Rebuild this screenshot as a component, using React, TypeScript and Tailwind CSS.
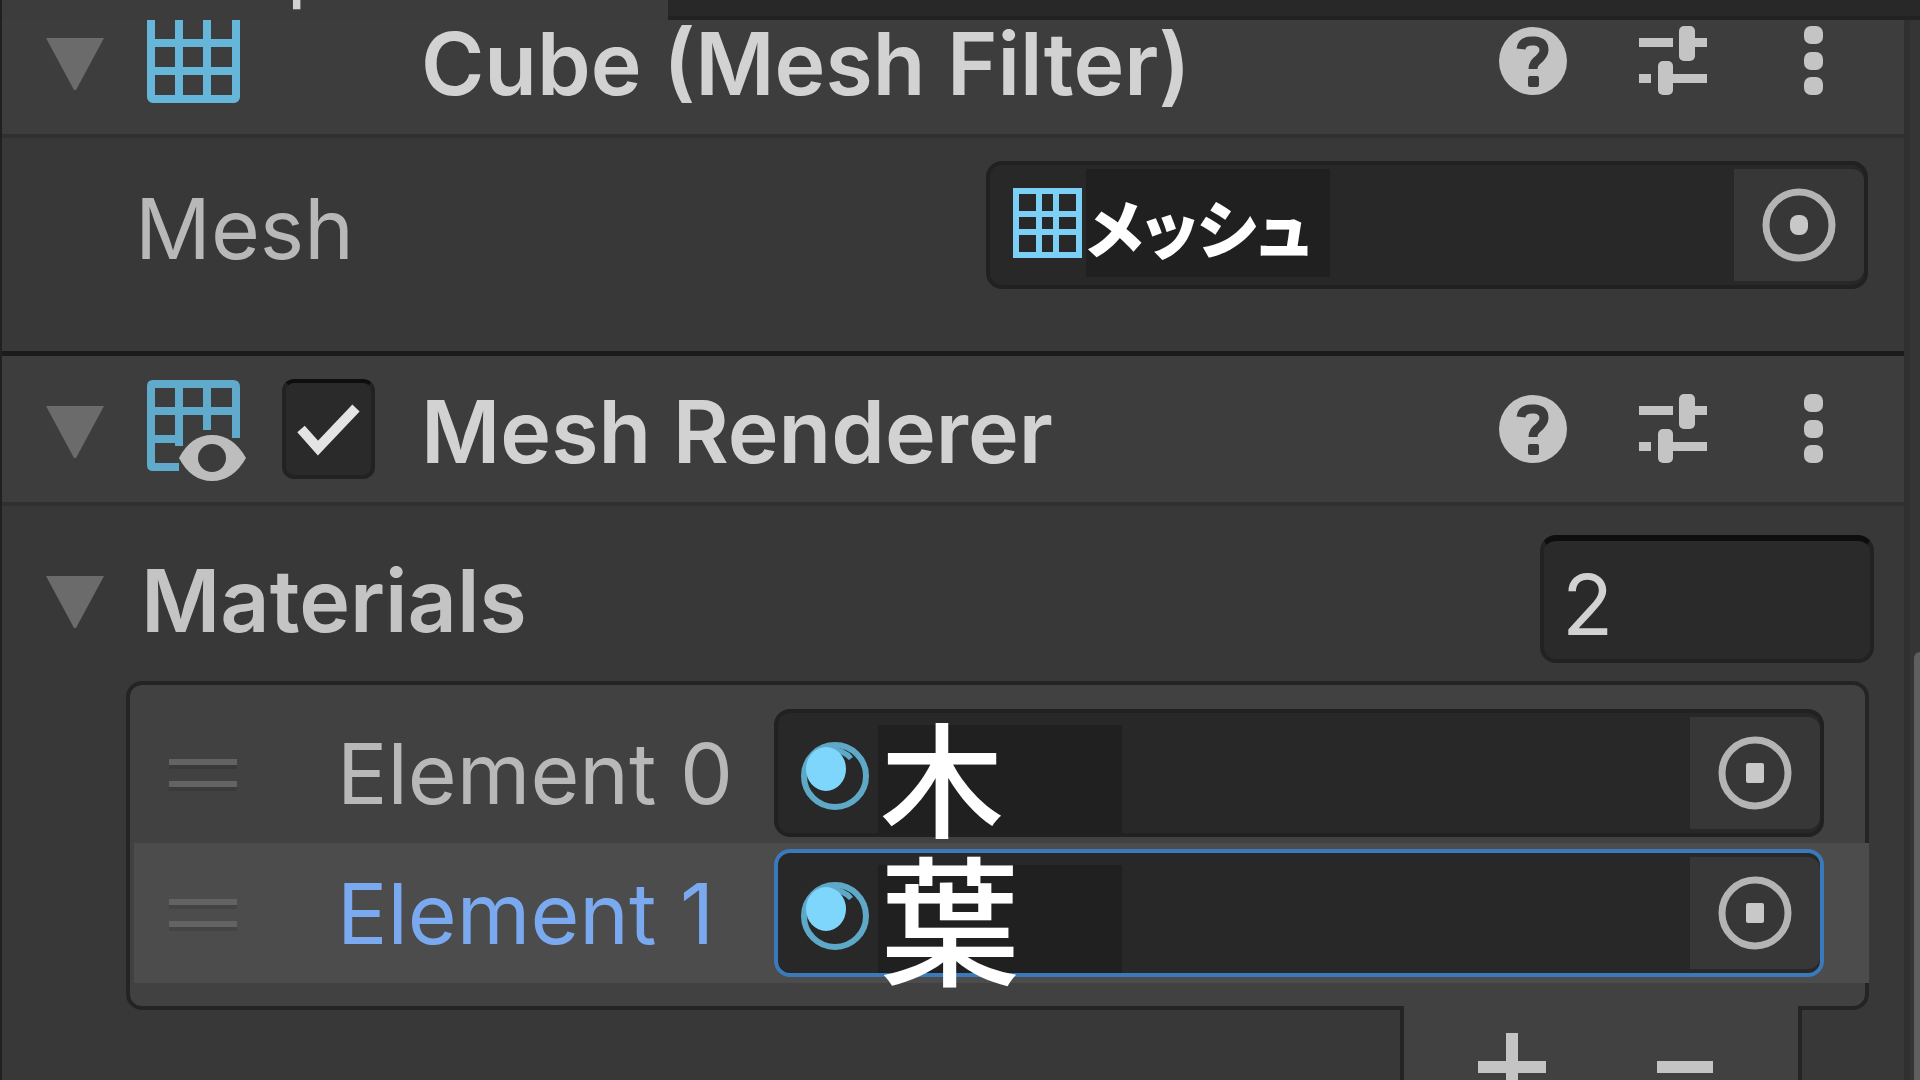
import { useState } from 'react';
import type { ReactNode } from 'react';
import clsx from 'clsx';

function FoldArrow() {
  return (
    <button type="button" aria-label="Toggle foldout" className="w-15 shrink-0">
      <svg viewBox="0 0 60 60" className="w-full fill-[#6b6b6b]">
        <path d="M1 7H59L31 59H29Z" />
      </svg>
    </button>
  );
}

function MeshFilterIcon() {
  return (
    <svg viewBox="0 0 104 106" className="w-26 shrink-0" fill="none" stroke="#66b6d9" strokeWidth="8">
      <rect x="6" y="7" width="85" height="84" rx="2" />
      <path d="M34 7V91M62 7V91M6 35H91M6 63H91" />
    </svg>
  );
}

function MeshRendererIcon() {
  return (
    <svg viewBox="0 0 104 106" className="w-26 shrink-0" fill="none">
      <g stroke="#60abcc" strokeWidth="8">
        <path d="M34 91H8Q6 91 6 89V10Q6 8 8 8H88Q91 8 91 11V62" />
        <path d="M34 8V70M62 8V54M6 35H91M6 63H38" />
      </g>
      <path d="M34 82Q46 59 67 59T101 82Q88 105 67 105T34 82Z" fill="#bdbdbd" />
      <circle cx="67" cy="82" r="14" fill="#3c3c3c" />
    </svg>
  );
}

function MeshAssetIcon() {
  return (
    <svg viewBox="0 0 70 76" className="w-17.5 shrink-0" fill="none" stroke="#7cd0f5" strokeWidth="6">
      <rect x="4" y="4" width="63" height="64" />
      <path d="M27 4V68M44 4V68M4 27H67M4 45H67" />
    </svg>
  );
}

function MaterialIcon() {
  return (
    <svg viewBox="0 0 70 76" className="w-17.5 shrink-0" fill="none">
      <circle cx="35" cy="41" r="31" stroke="#5fa9c8" strokeWidth="6" />
      <path d="M28 11Q46 12 53 22L49 25Q42 18 28 15Z" fill="#5fa9c8" />
      <ellipse cx="26" cy="34" rx="20" ry="22" fill="#7fd6fd" />
    </svg>
  );
}

function HeaderActions() {
  return (
    <div className="ml-auto flex items-center gap-17.5 pr-14 text-[#c4c4c4]">
      <button type="button" aria-label="Help">
        <svg viewBox="0 0 70 70" className="w-17.5" fill="none">
          <circle cx="35" cy="35" r="34" fill="currentColor" />
          <path
            d="M23 23Q24 15 34 15H37Q46 16 46 24Q46 28 41 33Q35 37 35 43"
            stroke="#3c3c3c"
            strokeWidth="9"
          />
          <rect x="30" y="50" width="11" height="11" rx="2" fill="#3c3c3c" />
        </svg>
      </button>
      <button type="button" aria-label="Presets">
        <svg viewBox="0 0 70 70" className="w-17.5 fill-current">
          <rect x="1" y="12" width="34" height="9" />
          <rect x="41" y="0" width="16" height="35" rx="5" />
          <rect x="57" y="12" width="12" height="9" />
          <rect x="1" y="48" width="12" height="9" />
          <rect x="20" y="35" width="15" height="34" rx="5" />
          <rect x="35" y="48" width="34" height="9" />
        </svg>
      </button>
      <button type="button" aria-label="More options">
        <svg viewBox="0 0 70 70" className="w-17.5 fill-current">
          <rect x="26" y="0" width="19" height="18" rx="7" />
          <rect x="26" y="26" width="19" height="18" rx="7" />
          <rect x="26" y="51" width="19" height="18" rx="7" />
        </svg>
      </button>
    </div>
  );
}

interface ComponentHeaderProps {
  title: string;
  icon: ReactNode;
  toggle?: ReactNode;
}

function ComponentHeader({ title, icon, toggle }: ComponentHeaderProps) {
  return (
    <div className="flex h-[146px] shrink-0 items-center bg-[#3d3d3d] pl-[43px]">
      <FoldArrow />
      <div className="ml-10">{icon}</div>
      <div className="ml-[33px] w-[93px]">{toggle}</div>
      <h2 className="ml-[46px] pt-1.5 text-[86px] leading-none font-semibold whitespace-nowrap text-[#d2d2d2]">
        {title}
      </h2>
      <HeaderActions />
    </div>
  );
}

interface ObjectFieldProps {
  id: string;
  icon: ReactNode;
  focused?: boolean;
  inList?: boolean;
  children: ReactNode;
}

function ObjectField({ id, icon, focused, inList, children }: ObjectFieldProps) {
  return (
    <div
      className={clsx(
        'flex h-32 flex-1 items-center rounded-2xl border-4 bg-[#282828] pl-[22px]',
        focused ? 'border-[#3a79bb]' : 'border-[#212121]'
      )}
    >
      {icon}
      <div
        className={clsx(
          "flex h-27 w-[244px] items-center bg-[#202020] font-['Noto_Sans_CJK_JP',sans-serif] whitespace-nowrap text-white",
          inList ? 'ml-2 self-end pb-2.5 pl-0.5' : 'mt-1 ml-1 self-start pt-1'
        )}
      >
        {children}
      </div>
      <button
        id={id}
        type="button"
        className="ml-auto flex h-28 w-[130px] items-center justify-center rounded-r-xl bg-[#373737]"
      >
        <svg viewBox="0 0 74 74" className="w-[74px]" fill="none">
          <circle cx="37" cy="37" r="33" stroke="#b4b4b4" strokeWidth="7" />
          <rect x="28" y="27" width="18" height="20" rx={inList ? 2 : 8} fill="#c8c8c8" />
        </svg>
      </button>
    </div>
  );
}

interface ElementRowProps {
  id: string;
  label: string;
  selected?: boolean;
  children: ReactNode;
}

function ElementRow({ id, label, selected, children }: ElementRowProps) {
  return (
    <li className={clsx('-mr-1 ml-1 flex h-35 items-center pr-[45px] pl-[35px]', selected && 'bg-[#4c4c4c]')}>
      <svg viewBox="0 0 68 36" className="w-17 shrink-0">
        <path d="M0 7H68M0 29H68" stroke="#636363" strokeWidth="6" />
        <path d="M0 12H68M0 34H68" stroke="#000" strokeOpacity="0.1" strokeWidth="4" />
      </svg>
      <label
        htmlFor={id}
        className={clsx(
          'ml-25 w-[437px] shrink-0 pt-0.5 text-[84px] leading-none whitespace-nowrap',
          selected ? 'text-[#7ba9f0]' : 'text-[#b8b8b8]'
        )}
      >
        {label}
      </label>
      <ObjectField id={id} icon={<MaterialIcon />} focused={selected} inList>
        {children}
      </ObjectField>
    </li>
  );
}

export default function App() {
  const [enabled, setEnabled] = useState(true);
  const [size, setSize] = useState('2');

  return (
    <div className="flex h-screen flex-col overflow-hidden bg-[#383838] font-['Inter',sans-serif]">
      <div className="flex h-5 shrink-0 bg-[#3c3c3c]">
        <div className="flex w-[668px] items-end overflow-hidden border-l-2 border-[#202020] pl-[168px] text-[84px] leading-none text-[#d2d2d2]">
          <span className="pb-4">Inspector</span>
        </div>
        <div className="flex-1 border-b-4 border-[#222222] bg-[#282828]" />
      </div>

      <div className="flex min-h-0 flex-1">
        <main className="flex min-w-0 flex-1 flex-col border-l-2 border-[#202020]">
          {/* scrolled, so only the lower part of this header shows */}
          <div className="flex h-[114px] shrink-0 flex-col justify-end overflow-hidden">
            <ComponentHeader title="Cube (Mesh Filter)" icon={<MeshFilterIcon />} />
          </div>
          <section className="flex h-[217px] shrink-0 items-start border-t-4 border-[#303030] pt-[23px] pr-9 pl-[133px]">
            <label
              htmlFor="mesh"
              className="flex h-32 w-[851px] shrink-0 items-center pt-2 text-[84px] leading-none text-[#b8b8b8]"
            >
              Mesh
            </label>
            <ObjectField id="mesh" icon={<MeshAssetIcon />}>
              <span className="text-[64px] leading-none font-black [font-feature-settings:'palt']">メッシュ</span>
            </ObjectField>
          </section>

          <div className="shrink-0 border-t-5 border-[#1b1b1b]">
            <ComponentHeader
              title="Mesh Renderer"
              icon={<MeshRendererIcon />}
              toggle={
                <div className="relative h-25">
                  <input
                    type="checkbox"
                    aria-label="Enable Mesh Renderer"
                    checked={enabled}
                    onChange={(e) => setEnabled(e.target.checked)}
                    className="peer block size-full appearance-none rounded-xl border-4 border-[#222222] border-t-[#0e0e0e] bg-[#2a2a2a]"
                  />
                  <svg
                    viewBox="0 0 93 100"
                    className="pointer-events-none invisible absolute inset-0 size-full peer-checked:visible"
                    fill="none"
                  >
                    <path d="M19 50L36 69L74 29" stroke="#e4e4e4" strokeWidth="10" />
                  </svg>
                </div>
              }
            />
          </div>

          <section className="border-t-4 border-[#303030] pt-[29px]">
            <div className="flex h-32 items-center pr-[30px] pl-[43px]">
              <FoldArrow />
              <h3 className="ml-9 pt-1 text-[86px] leading-none font-semibold text-[#c4c4c4]">Materials</h3>
              <input
                type="text"
                aria-label="Materials size"
                value={size}
                onChange={(e) => setSize(e.target.value)}
                className="ml-auto h-32 w-[334px] rounded-2xl border-4 border-t-6 border-[#222222] border-t-[#0e0e0e] bg-[#2a2a2a] pt-2 pl-[18px] text-[84px] leading-none text-[#d2d2d2] outline-none"
              />
            </div>

            <div className="mt-[18px] pr-[35px] pl-[124px]">
              <ul className="rounded-2xl border-4 border-[#242424] bg-[#414141] pt-[18px] pb-[23px]">
                <ElementRow id="element-0" label="Element 0">
                  <span className="text-[124px] leading-none font-medium">木</span>
                </ElementRow>
                <ElementRow id="element-1" label="Element 1" selected>
                  <span className="text-[140px] leading-none font-medium">葉</span>
                </ElementRow>
              </ul>
              <div className="relative -mt-1 mr-[67px] ml-auto flex w-[402px] items-center gap-[103px] border-x-4 border-[#242424] bg-[#414141] pt-[26px] pl-[73px] text-[#c4c4c4]">
                <button type="button" aria-label="Add element">
                  <svg viewBox="0 0 70 70" className="w-17.5" stroke="currentColor" strokeWidth="12">
                    <path d="M1 35H69M35 1V69" />
                  </svg>
                </button>
                <button type="button" aria-label="Remove element">
                  <svg viewBox="0 0 70 70" className="w-17.5" stroke="currentColor" strokeWidth="12">
                    <path d="M7 35H63" />
                  </svg>
                </button>
              </div>
            </div>
          </section>
        </main>

        <div className="flex w-4 shrink-0 flex-col border-l-6 border-[#303030] bg-[#353535] pt-[632px] pl-1">
          <div className="flex-1 rounded-tl-lg bg-[#5f5f5f]" />
        </div>
      </div>
    </div>
  );
}
